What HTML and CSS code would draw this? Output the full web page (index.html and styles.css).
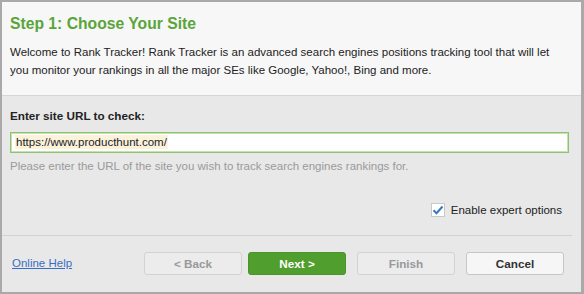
FILE: index.html
```html
<!DOCTYPE html>
<html>
<head>
<meta charset="utf-8">
<link rel="stylesheet" href="styles.css">
</head>
<body>
<div class="dialog">
  <div class="header">
    <h1 class="title">Step 1: Choose Your Site</h1>
    <p class="intro">Welcome to Rank Tracker! Rank Tracker is an advanced search engines positions tracking tool that will let you monitor your rankings in all the major SEs like Google, Yahoo!, Bing and more.</p>
  </div>
  <div class="main">
    <div class="label">Enter site URL to check:</div>
    <div class="input"><span class="sel">https://www.producthunt.com/</span></div>
    <div class="hint">Please enter the URL of the site you wish to track search engines rankings for.</div>
    <div class="options">
      <span class="check"><svg width="12" height="10" viewBox="0 0 12 10"><path d="M1.5 5.2 L4.5 8.2 L10.5 1.5" fill="none" stroke="#3a78c2" stroke-width="2"/></svg></span>
      <span class="opt-label">Enable expert options</span>
    </div>
  </div>
  <div class="sep"></div>
  <div class="footer">
    <a class="help">Online Help</a>
    <div class="buttons">
      <div class="btn disabled back">&lt; Back</div>
      <div class="btn primary">Next &gt;</div>
      <div class="btn disabled">Finish</div>
      <div class="btn normal">Cancel</div>
    </div>
  </div>
</div>
</body>
</html>
```
FILE: styles.css
```css
html, body {
  margin: 0;
  padding: 0;
}
body {
  width: 584px;
  height: 294px;
  font-family: "Liberation Sans", Arial, sans-serif;
  color: #222;
}
.dialog {
  box-sizing: border-box;
  width: 584px;
  height: 294px;
  border: 2px solid #a9a9a9;
  border-right-width: 3px;
  background: #e8e8e8;
  display: flex;
  flex-direction: column;
}
.header {
  background: #f7f7f7;
  border-bottom: 1px solid #d6d6d6;
  padding: 12px 12px 0 8px;
  height: 94px;
  box-sizing: border-box;
}
.title {
  margin: 0;
  font-size: 15.7px;
  line-height: 20px;
  font-weight: bold;
  color: #5aa53a;
}
.intro {
  margin: 9px 0 0 0;
  font-size: 11.5px;
  line-height: 18px;
  color: #222;
}
.main {
  padding: 11px 12px 0 8px;
  flex: 1;
  display: flex;
  flex-direction: column;
}
.label {
  font-size: 11.7px;
  font-weight: bold;
  line-height: 18px;
}
.input {
  margin-top: 7px;
  height: 21px;
  box-sizing: border-box;
  border: 1px solid #8fc46e;
  box-shadow: inset 0 0 0 1px #c5e0b3;
  background: #fff;
  padding: 0 4px;
  font-size: 11.5px;
  line-height: 19px;
  color: #222;
}
.sel {
  background: #fbf2dc;
  padding: 1px 1px;
}
.hint {
  margin-top: 4px;
  font-size: 11.5px;
  line-height: 18px;
  color: #9a9a9a;
}
.options {
  margin-top: 26px;
  display: flex;
  justify-content: flex-end;
  align-items: center;
  gap: 6px;
  padding-right: 7px;
}
.check {
  width: 14px;
  height: 14px;
  box-sizing: border-box;
  border: 1px solid #c9c9c9;
  background: #fff;
  display: flex;
  align-items: center;
  justify-content: center;
}
.opt-label {
  font-size: 11.5px;
  line-height: 18px;
  color: #222;
}
.sep {
  height: 1px;
  background: #d2d2d2;
  margin: 0 9px 0 0;
}
.footer {
  height: 56px;
  display: flex;
  align-items: center;
  justify-content: space-between;
  padding: 0 17px 2px 10px;
  box-sizing: border-box;
}
.help {
  font-size: 11.5px;
  color: #3a6ec2;
  text-decoration: underline;
}
.buttons {
  display: flex;
  gap: 11px;
}
.btn {
  width: 98px;
  height: 23px;
  box-sizing: border-box;
  border-radius: 3px;
  font-size: 11.7px;
  font-weight: bold;
  line-height: 21px;
  text-align: center;
}
.btn.back {
  margin-right: -5px;
}
.btn.disabled {
  background: #ececec;
  border: 1px solid #d2d2d2;
  color: #999;
}
.btn.primary {
  background: #4f9e2e;
  border: 1px solid #4a9429;
  color: #fff;
}
.btn.normal {
  background: #f6f6f6;
  border: 1px solid #c6c6c6;
  color: #333;
}
```
